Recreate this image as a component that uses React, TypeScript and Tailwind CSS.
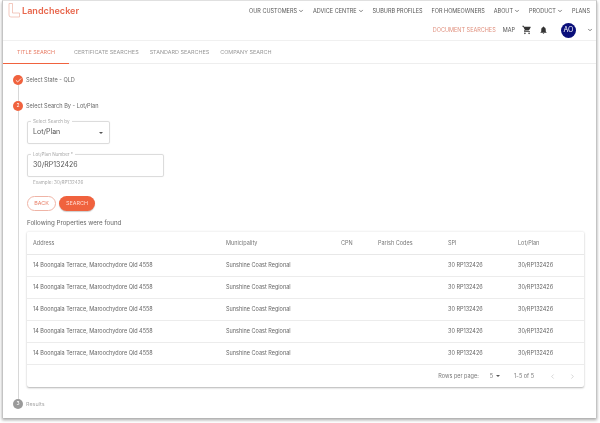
import { Check, ChevronDown, ChevronLeft, ChevronRight } from "lucide-react";

const navItems = [
  { label: "OUR CUSTOMERS", caret: true },
  { label: "ADVICE CENTRE", caret: true },
  { label: "SUBURB PROFILES", caret: false },
  { label: "FOR HOMEOWNERS", caret: false },
  { label: "ABOUT", caret: true },
  { label: "PRODUCT", caret: true },
  { label: "PLANS", caret: false },
];

const tabs = ["CERTIFICATE SEARCHES", "STANDARD SEARCHES", "COMPANY SEARCH"];
const rows = [1, 2, 3, 4, 5];

function Logo() {
  return (
    <div className="flex items-center gap-[2px]">
      <svg width="12" height="15" viewBox="0 0 12 15" fill="none" stroke="#eeb3a5" strokeWidth="0.7">
        <path d="M1 0.5H4.5V10H11.5V14H3Q1 14 1 12Z" />
      </svg>
      <span className="text-[9.1px] font-semibold text-[#e8674d] leading-none">Landchecker</span>
    </div>
  );
}

function Cart() {
  return (
    <svg width="10" height="10" viewBox="0 0 24 24" fill="#333">
      <path d="M7 18c-1.1 0-2 .9-2 2s.9 2 2 2 2-.9 2-2-.9-2-2-2zM1 2v2h2l3.6 7.59-1.35 2.45c-.16.28-.25.61-.25.96 0 1.1.9 2 2 2h12v-2H7.42c-.14 0-.25-.11-.25-.25l.03-.12.9-1.63h7.45c.75 0 1.41-.41 1.75-1.03l3.58-6.49A1 1 0 0 0 20.01 4H5.21l-.94-2H1zm16 16c-1.1 0-2 .9-2 2s.9 2 2 2 2-.9 2-2-.9-2-2-2z" />
    </svg>
  );
}

function Bell() {
  return (
    <svg width="9" height="10" viewBox="0 0 24 24" fill="#333">
      <path d="M12 22c1.1 0 2-.9 2-2h-4c0 1.1.9 2 2 2zm6-6v-5c0-3.07-1.63-5.64-4.5-6.32V4c0-.83-.67-1.5-1.5-1.5s-1.5.67-1.5 1.5v.68C7.64 5.36 6 7.92 6 11v5l-2 2v1h16v-1l-2-2z" />
    </svg>
  );
}

function Header() {
  return (
    <header className="h-[40px] border-b border-[#f0f0f0] pl-[5px] pr-[3px] flex flex-col shrink-0">
      <div className="flex justify-between items-center h-[20px]">
        <Logo />
        <nav className="flex items-center gap-[9px] mr-[3px]">
          {navItems.map((item) => (
            <span key={item.label} className="flex items-center text-[5.5px] text-[#555]">
              {item.label}
              {item.caret && <ChevronDown size={6} strokeWidth={3} className="ml-[1px]" />}
            </span>
          ))}
        </nav>
      </div>
      <div className="flex justify-end items-center h-[20px]">
        <span className="text-[5.5px] text-[#e0907e] mr-[7px]">DOCUMENT SEARCHES</span>
        <span className="text-[5.5px] text-[#555] mr-[7px]">MAP</span>
        <span className="mr-[7px] flex"><Cart /></span>
        <span className="mr-[13px] flex"><Bell /></span>
        <span className="w-[15px] h-[15px] rounded-full bg-[#0a0f7a] text-white text-[7px] flex items-center justify-center mr-[11px]">AO</span>
        <ChevronDown size={6} strokeWidth={3} className="text-[#555]" />
      </div>
    </header>
  );
}

function Tabs() {
  return (
    <div className="h-[23px] border-b border-[#eeeeee] flex items-stretch shrink-0">
      <div className="w-[66px] border-b border-[#f0623e] -mb-[1px] flex items-center justify-center text-[5.4px] text-[#e8806a]">
        TITLE SEARCH
      </div>
      <div className="flex items-center gap-[11px] pl-[5px]">
        {tabs.map((t) => (
          <span key={t} className="text-[5.45px] text-[#999]">{t}</span>
        ))}
      </div>
    </div>
  );
}

function StepDot({ children, grey }: { children: React.ReactNode; grey?: boolean }) {
  return (
    <span className={`w-[10px] h-[10px] rounded-full flex items-center justify-center text-white text-[5px] shrink-0 ${grey ? "bg-[#9a9a9a]" : "bg-[#f0623e]"}`}>
      {children}
    </span>
  );
}

function OutlinedField({ label, value, width, caret }: { label: string; value: string; width: string; caret?: boolean }) {
  return (
    <div className={`relative h-[23px] border border-[#dcdcdc] rounded-[2px] flex items-center justify-between pl-[5px] pr-[6px] text-[7px] text-[#555] shadow-[0_0_1px_rgba(0,0,0,0.12)] ${width}`}>
      <span className="absolute -top-[3px] left-[3px] bg-white px-[2px] text-[4.6px] leading-[5px] text-[#aaa]">{label}</span>
      {value}
      {caret && <span className="w-0 h-0 border-x-[2px] border-x-transparent border-t-[2px] border-t-[#555]" />}
    </div>
  );
}

function ResultsTable() {
  const cell = "text-[5.5px] text-[#666]";
  const grid = "grid grid-cols-[193px_115px_37px_70px_70px_1fr] pl-[6px] items-center";
  return (
    <div className="w-[557px] rounded-[2px] shadow-[0_1px_2px_rgba(0,0,0,0.3)] border-t border-[#f4f4f4]">
      <div className={`${grid} h-[23px] border-b border-[#e8e8e8]`}>
        {["Address", "Municipality", "CPN", "Parish Codes", "SPI", "Lot/Plan"].map((h) => (
          <span key={h} className="text-[5.5px] text-[#777]">{h}</span>
        ))}
      </div>
      {rows.map((r) => (
        <div key={r} className={`${grid} h-[22px] border-b border-[#ececec]`}>
          <span className={cell}>14 Boongala Terrace, Maroochydore Qld 4558</span>
          <span className={cell}>Sunshine Coast Regional</span>
          <span />
          <span />
          <span className={cell}>30 RP132426</span>
          <span className={cell}>30/RP132426</span>
        </div>
      ))}
      <div className="h-[22px] flex items-center justify-end text-[5.5px] text-[#777] pr-[8px]">
        <span className="mr-[11px]">Rows per page:</span>
        <span className="mr-[3px]">5</span>
        <span className="w-0 h-0 border-x-[2px] border-x-transparent border-t-[2px] border-t-[#555] mr-[14px]" />
        <span className="mr-[15px]">1-5 of 5</span>
        <ChevronLeft size={7} className="text-[#bbb] mr-[13px]" />
        <ChevronRight size={7} className="text-[#bbb]" />
      </div>
    </div>
  );
}

export default function App() {
  return (
    <div className="w-[600px] h-[423px] bg-white overflow-hidden font-['Inter',sans-serif]">
      <div className="ml-[2px] w-[595px] h-[418px] border-x border-[#c4c4c4] border-t border-t-[#e0e0e0] shadow-[0_2px_3px_rgba(0,0,0,0.35)] flex flex-col blur-[0.35px]">
        <Header />
        <Tabs />
        <div className="flex-1 pl-[10px] pt-[11px] flex flex-col">
          <div className="flex items-center gap-[3px] h-[10px]">
            <StepDot><Check size={7} strokeWidth={3} /></StepDot>
            <span className="text-[5.6px] text-[#666]">Select State - QLD</span>
          </div>
          <div className="ml-[5px] w-px h-[16px] border-l border-[#d8d8d8]" />
          <div className="flex items-center gap-[3px] h-[10px]">
            <StepDot>2</StepDot>
            <span className="text-[5.6px] text-[#666]">Select Search By - Lot/Plan</span>
          </div>
          <div className="ml-[5px] border-l border-[#d8d8d8] pl-[8px] pt-[10px] h-[288px] flex flex-col items-start">
            <OutlinedField label="Select Search by" value="Lot/Plan" width="w-[83px]" caret />
            <div className="mt-[10px]">
              <OutlinedField label="Lot/Plan Number *" value="30/RP132426" width="w-[137px]" />
            </div>
            <p className="text-[4.6px] text-[#aaa] mt-[3px] ml-[6px] leading-[6px]">Example: 30/RP132426</p>
            <div className="flex gap-[3px] mt-[10px]">
              <button className="w-[29px] h-[15px] rounded-full border border-[#efb4a6] text-[5.4px] text-[#e8806a]">BACK</button>
              <button className="w-[36px] h-[15px] rounded-full bg-[#f0623e] text-[5.4px] text-[#ffd9cf] shadow-[0_1px_1px_rgba(0,0,0,0.2)]">SEARCH</button>
            </div>
            <p className="text-[6.2px] text-[#666] mt-[7px] mb-[4px] leading-[9px]">Following Properties were found</p>
            <ResultsTable />
          </div>
          <div className="flex items-center gap-[3px] h-[10px]">
            <StepDot grey>3</StepDot>
            <span className="text-[5.4px] text-[#aaa]">Results</span>
          </div>
        </div>
      </div>
    </div>
  );
}
